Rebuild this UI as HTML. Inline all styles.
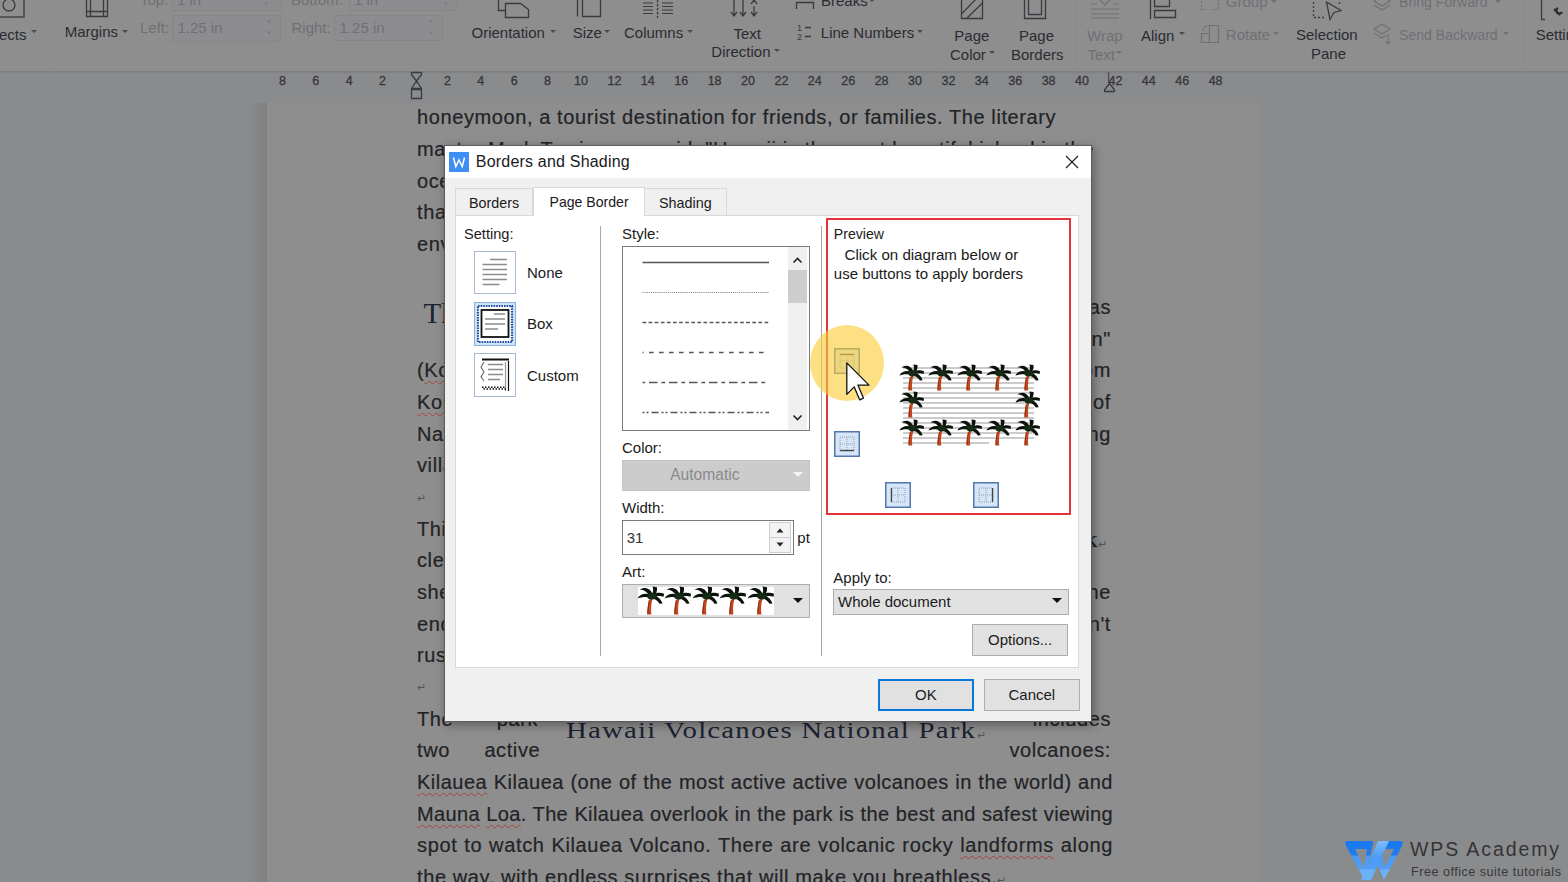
<!DOCTYPE html>
<html><head><meta charset="utf-8">
<style>
*{margin:0;padding:0;box-sizing:border-box}
html,body{width:1568px;height:882px;overflow:hidden;background:#8a8b8d;font-family:"Liberation Sans",sans-serif}
.a{position:absolute;white-space:pre}
#ribbon{position:absolute;left:0;top:0;width:1568px;height:72px;background:#8e8e8f;border-bottom:1px solid #808083;box-shadow:0 1px 1px rgba(0,0,0,0.06)}
.rt{position:absolute;white-space:pre;font-size:15px;color:#2b2c31;line-height:18px}
.rd{color:#6f7074}
.car{position:absolute;width:0;height:0;border-left:3px solid transparent;border-right:3px solid transparent;border-top:3px solid #4a4b50}
.sep{position:absolute;top:0;width:1px;height:70px;background:#8a8a8c}
.inp{position:absolute;border:1px solid #868689;background:#8d8d90;border-radius:2px}
#ruler .n{position:absolute;top:74px;font-size:12.5px;color:#35363b;-webkit-text-stroke:0.3px #35363b;width:30px;text-align:center;margin-left:-15px;line-height:14px}
#page{position:absolute;left:267px;top:103px;width:993px;height:800px;background:#8e8e8e}
#pshadow{position:absolute;left:249px;top:103px;width:18px;height:800px;background:linear-gradient(to right,rgba(0,0,0,0),rgba(0,0,0,0.05) 60%,rgba(0,0,0,0.08))}
.t{position:absolute;white-space:pre;font-size:20px;color:#222326;line-height:24px;letter-spacing:0.6px;-webkit-text-stroke:0.2px #222326}
.sq{text-decoration:underline wavy #a8443c;text-decoration-thickness:1px;text-underline-offset:3px}
.hd{position:absolute;white-space:pre;font-family:"Liberation Serif",serif;color:#1b2232;font-size:24px;letter-spacing:1px;line-height:28px;transform:scaleX(1.2);transform-origin:0 0}
.j{width:696px;text-align:justify;text-align-last:justify;white-space:normal}
.dt{position:absolute;white-space:pre;line-height:18px;color:#1a1a1a}
.tab{position:absolute}
.ret{position:absolute;font-size:11px;color:#55565a;line-height:12px}
</style></head><body>
<div id="ribbon">
<!-- effects partial -->
<svg class="a" style="left:0;top:0" width="30" height="20"><rect x="-5" y="-4" width="29" height="21" fill="none" stroke="#3a3b40" stroke-width="1.3"/><circle cx="9" cy="5" r="6" fill="none" stroke="#3a3b40" stroke-width="1.3"/></svg>
<div class="rt" style="left:-1px;top:25.6px">ects</div><div class="car" style="left:31px;top:30px"></div>
<div class="sep" style="left:50px"></div>
<!-- margins -->
<svg class="a" style="left:85px;top:0" width="24" height="18"><path d="M1.5 -2V16.5H22.5V-2M5.5 -2V16.5M18.5 -2V16.5M1.5 11.5H22.5" fill="none" stroke="#3a3b40" stroke-width="1.3"/></svg>
<div class="rt" style="left:64.7px;top:23.1px">Margins</div><div class="car" style="left:122px;top:30px"></div>
<div class="rt rd" style="left:140px;top:-9px">Top:</div>
<div class="inp" style="left:172px;top:-10px;width:110px;height:21px"></div>
<div class="rt rd" style="left:177px;top:-9px">1 in</div>
<div class="rt rd" style="left:140px;top:19px">Left:</div>
<div class="inp" style="left:172px;top:14.5px;width:109px;height:27px"></div>
<div class="rt rd" style="left:177.4px;top:19px">1.25 in</div>
<svg class="a" style="left:264px;top:17px" width="10" height="20"><path d="M2.5 5.5L5 2.5L7.5 5.5ZM2.5 14.5L5 17.5L7.5 14.5Z" fill="#7c7d81"/></svg>
<div class="rt rd" style="left:291px;top:-9px">Bottom:</div>
<div class="inp" style="left:348.7px;top:-10px;width:109px;height:21px"></div>
<div class="rt rd" style="left:354px;top:-9px">1 in</div>
<div class="rt rd" style="left:291.5px;top:19px">Right:</div>
<div class="inp" style="left:334px;top:14.5px;width:109px;height:26px"></div>
<div class="rt rd" style="left:339.6px;top:19px">1.25 in</div>
<svg class="a" style="left:426px;top:17px" width="10" height="20"><path d="M2.5 5.5L5 2.5L7.5 5.5ZM2.5 14.5L5 17.5L7.5 14.5Z" fill="#7c7d81"/></svg>
<svg class="a" style="left:261px;top:0px" width="10" height="8"><path d="M2.5 2.5L5 5.5L7.5 2.5Z" fill="#7c7d81"/></svg>
<svg class="a" style="left:441px;top:0px" width="10" height="8"><path d="M2.5 2.5L5 5.5L7.5 2.5Z" fill="#7c7d81"/></svg>
<!-- orientation -->
<svg class="a" style="left:496px;top:0" width="36" height="20"><path d="M2.5 -2V10.5H9.5" fill="none" stroke="#3a3b40" stroke-width="1.3"/><path d="M9.5 3.5H24.5L32.5 9.5V17.5H9.5Z" fill="none" stroke="#3a3b40" stroke-width="1.3"/></svg>
<div class="rt" style="left:471.5px;top:23.6px">Orientation</div><div class="car" style="left:549.5px;top:30px"></div>
<!-- size -->
<svg class="a" style="left:574px;top:0" width="30" height="20"><path d="M3.5 -2V16.5M8.5 -2V16.5H26.5V-2" fill="none" stroke="#3a3b40" stroke-width="1.3"/></svg>
<div class="rt" style="left:572.7px;top:23.6px">Size</div><div class="car" style="left:603.5px;top:30px"></div>
<!-- columns -->
<svg class="a" style="left:642px;top:0" width="34" height="20"><path d="M1 3H11M1 6.5H11M1 10H11M1 13.5H11M20 3H31M20 6.5H31M20 10H31M20 13.5H31" fill="none" stroke="#3a3b40" stroke-width="1.2"/><path d="M15.5 0V18" stroke="#3a3b40" stroke-width="1.3" stroke-dasharray="2.5 1.5"/></svg>
<div class="rt" style="left:624px;top:23.6px">Columns</div><div class="car" style="left:687px;top:30px"></div>
<!-- text direction -->
<svg class="a" style="left:730px;top:0" width="30" height="20"><path d="M4 -2V15M1 12L4 16L7 12M13 -2V15M10 12L13 16L16 12M24 6V15M21 12L24 16L27 12M21 4L24 0L27 4" fill="none" stroke="#3a3b40" stroke-width="1.3"/></svg>
<div class="rt" style="left:733.5px;top:24.6px">Text</div>
<div class="rt" style="left:711.3px;top:42.8px">Direction</div><div class="car" style="left:774px;top:49px"></div>
<!-- breaks / line numbers -->
<svg class="a" style="left:795px;top:0" width="20" height="10"><path d="M1.5 9V2.5H18.5V9" fill="none" stroke="#3a3b40" stroke-width="1.3"/></svg>
<div class="rt" style="left:821px;top:-8px">Breaks</div><div class="car" style="left:869px;top:-1px"></div>
<svg class="a" style="left:796px;top:22px" width="20" height="20"><text x="1" y="9" font-size="9" font-family="Liberation Sans" fill="#3a3b40">1</text><text x="1" y="18" font-size="9" font-family="Liberation Sans" fill="#3a3b40">2</text><path d="M9 5.5H15M9 14.5H15" stroke="#3a3b40" stroke-width="1.4"/></svg>
<div class="rt" style="left:820.8px;top:23.8px">Line Numbers</div><div class="car" style="left:917px;top:30px"></div>
<div class="sep" style="left:937px"></div>
<!-- page color -->
<svg class="a" style="left:958px;top:0" width="28" height="20"><path d="M3.5 -2V18.5H24.5V-2M3.5 14L18 -1M9 18L24.5 3" fill="none" stroke="#3a3b40" stroke-width="1.3"/></svg>
<div class="rt" style="left:954.3px;top:27.1px">Page</div>
<div class="rt" style="left:950px;top:45.8px">Color</div><div class="car" style="left:989px;top:51px"></div>
<!-- page borders -->
<svg class="a" style="left:1022px;top:0" width="26" height="20"><path d="M2.5 -2V18.5H23.5V-2M6.5 -2V14.5H19.5V-2" fill="none" stroke="#3a3b40" stroke-width="1.3"/></svg>
<div class="rt" style="left:1019px;top:27.1px">Page</div>
<div class="rt" style="left:1011px;top:45.8px">Borders</div>
<div class="sep" style="left:1075px"></div>
<!-- wrap text -->
<svg class="a" style="left:1089px;top:0" width="32" height="20"><path d="M2 4H8M24 4H30M2 9H30M2 14H30M2 18H30" stroke="#707175" stroke-width="1.2"/><path d="M10 -1L16 5L22 -1" fill="none" stroke="#707175" stroke-width="1.3"/></svg>
<div class="rt rd" style="left:1087px;top:27.1px">Wrap</div>
<div class="rt rd" style="left:1087.4px;top:45.8px">Text</div><div class="car" style="left:1116px;top:51px;border-top-color:#707175"></div>
<!-- align -->
<svg class="a" style="left:1147px;top:0" width="32" height="20"><path d="M3.5 -2V19M7.5 -2V6.5H22.5V-2M7.5 10.5H28.5V17.5H7.5Z" fill="none" stroke="#3a3b40" stroke-width="1.3"/></svg>
<div class="rt" style="left:1141px;top:27.1px">Align</div><div class="car" style="left:1179px;top:32px"></div>
<!-- group / rotate -->
<svg class="a" style="left:1200px;top:0" width="20" height="12"><path d="M1.5 -2V9.5H7M12 9.5H18.5V-2" fill="none" stroke="#707175" stroke-width="1.2" stroke-dasharray="2 1.5"/></svg>
<div class="rt rd" style="left:1225.8px;top:-6.8px">Group</div><div class="car" style="left:1271px;top:0px;border-top-color:#707175"></div>
<svg class="a" style="left:1199px;top:24px" width="22" height="20"><path d="M2.5 18.5V9.5H10.5V18.5ZM10.5 18.5H19.5V1.5H10.5V9.5M4 7C4 3 7 1.5 10 1.5" fill="none" stroke="#707175" stroke-width="1.2"/></svg>
<div class="rt rd" style="left:1225.8px;top:26.1px">Rotate</div><div class="car" style="left:1273px;top:32px;border-top-color:#707175"></div>
<!-- selection pane -->
<svg class="a" style="left:1312px;top:0" width="32" height="22"><path d="M1.5 -2V17.5H12" fill="none" stroke="#3a3b40" stroke-width="1.3" stroke-dasharray="2 2"/><path d="M27.5 -2V6" fill="none" stroke="#3a3b40" stroke-width="1.3" stroke-dasharray="2 2"/><path d="M14.5 2L29 10.5L22 12.5L18 19.5Z" fill="none" stroke="#3a3b40" stroke-width="1.3"/></svg>
<div class="rt" style="left:1296px;top:26.1px">Selection</div>
<div class="rt" style="left:1311px;top:44.7px">Pane</div>
<!-- bring / send -->
<svg class="a" style="left:1372px;top:0" width="22" height="14"><path d="M2 5L10 10L18 5M2 1L10 -4L18 1L10 6Z" fill="none" stroke="#707175" stroke-width="1.2"/></svg>
<div class="rt rd" style="left:1399px;top:-6.8px;font-size:14.1px">Bring Forward</div><div class="car" style="left:1495px;top:0px;border-top-color:#707175"></div>
<svg class="a" style="left:1372px;top:24px" width="22" height="22"><path d="M2 5L10 0L18 5L10 10ZM2 9L10 14L14 11.5M16 10V20M13.5 17.5L16 20L18.5 17.5" fill="none" stroke="#707175" stroke-width="1.2"/></svg>
<div class="rt rd" style="left:1399px;top:26.1px;font-size:14.1px">Send Backward</div><div class="car" style="left:1503px;top:32px;border-top-color:#707175"></div>
<div class="sep" style="left:1523px"></div>
<svg class="a" style="left:1540px;top:0" width="28" height="22"><path d="M1.5 -2V19.5H5" fill="none" stroke="#3a3b40" stroke-width="1.3"/><path d="M14 9L20 15M18 8a3 3 0 1 0 4 4" fill="none" stroke="#2b2c31" stroke-width="2.2"/></svg>
<div class="rt" style="left:1535.7px;top:26.1px">Settings</div>
</div>

<div id="ruler"><div class="n" style="left:282.4px">8</div><div class="n" style="left:315.8px">6</div><div class="n" style="left:349.2px">4</div><div class="n" style="left:382.6px">2</div><div class="n" style="left:447.4px">2</div><div class="n" style="left:480.8px">4</div><div class="n" style="left:514.2px">6</div><div class="n" style="left:547.6px">8</div><div class="n" style="left:581.0px">10</div><div class="n" style="left:614.4px">12</div><div class="n" style="left:647.8px">14</div><div class="n" style="left:681.2px">16</div><div class="n" style="left:714.6px">18</div><div class="n" style="left:748.0px">20</div><div class="n" style="left:781.4px">22</div><div class="n" style="left:814.8px">24</div><div class="n" style="left:848.2px">26</div><div class="n" style="left:881.6px">28</div><div class="n" style="left:915.0px">30</div><div class="n" style="left:948.4px">32</div><div class="n" style="left:981.8px">34</div><div class="n" style="left:1015.2px">36</div><div class="n" style="left:1048.6px">38</div><div class="n" style="left:1082.0px">40</div><div class="n" style="left:1115.4px">42</div><div class="n" style="left:1148.8px">44</div><div class="n" style="left:1182.2px">46</div><div class="n" style="left:1215.6px">48</div>
<svg class="a" style="left:410px;top:71px" width="14" height="29"><path d="M1.5 1.5H11.5V3.5L6.5 10L1.5 3.5Z M6.5 10L1.5 17.5H11.5Z M1.5 18.5H11.5V27.5H1.5Z" fill="none" stroke="#3a3b40" stroke-width="1.3" stroke-linejoin="round"/></svg>
<svg class="a" style="left:1103px;top:72px" width="14" height="21"><path d="M5.7 0V11" stroke="#3a3b40" stroke-width="1"/><path d="M1.5 19.5H11.5V18L6.5 11.5L1.5 18Z" fill="none" stroke="#3a3b40" stroke-width="1.3" stroke-linejoin="round"/></svg>
</div>
<div id="doc">
<div id="pshadow"></div>
<div id="page"></div>
<div class="t" style="left:417px;top:105.2px;">honeymoon, a tourist destination for friends, or families. The literary</div>
<div class="t" style="left:417px;top:136.9px;">master Mark Twain once said, &quot;Hawaii is the most beautiful island in the</div>
<div class="t" style="left:417px;top:168.5px;">ocean</div>
<div class="t" style="left:417px;top:200.2px;">that</div>
<div class="t" style="left:417px;top:231.8px;">envy</div>
<div class="t" style="right:457px;top:295.1px;">as</div>
<div class="t" style="right:457px;top:326.8px;">in&quot;</div>
<div class="t" style="left:417px;top:358.4px;">(<span class="sq">Kona</span></div>
<div class="t" style="right:457px;top:358.4px;">om</div>
<div class="t" style="left:417px;top:390.1px;"><span class="sq">Kona</span></div>
<div class="t" style="right:457px;top:390.1px;">of</div>
<div class="t" style="left:417px;top:421.7px;">Nat</div>
<div class="t" style="right:457px;top:421.7px;">ng</div>
<div class="t" style="left:417px;top:453.4px;">village</div>
<div class="t" style="left:417px;top:516.6px;">This</div>
<div class="t" style="left:417px;top:548.3px;">clear</div>
<div class="t" style="left:417px;top:580.0px;">shell</div>
<div class="t" style="right:457px;top:580.0px;">he</div>
<div class="t" style="left:417px;top:611.6px;">end</div>
<div class="t" style="right:457px;top:611.6px;">n&#39;t</div>
<div class="t" style="left:417px;top:643.2px;">rush</div>
<div class="t" style="left:417px;top:706.6px;">The</div>
<div class="t" style="left:496.8px;top:706.6px;">park</div>
<div class="t" style="right:457px;top:706.6px;">includes</div>
<div class="t" style="left:417px;top:738.2px;">two</div>
<div class="t" style="left:484.4px;top:738.2px;">active</div>
<div class="t" style="right:457px;top:738.2px;">volcanoes:</div>
<div class="t j" style="left:417px;top:769.9px;letter-spacing:0.5px"><span class="sq">Kilauea</span> Kilauea (one of the most active active volcanoes in the world) and</div>
<div class="t j" style="left:417px;top:801.5px;letter-spacing:0.36px"><span class="sq">Mauna</span> <span class="sq">Loa</span>. The Kilauea overlook in the park is the best and safest viewing</div>
<div class="t j" style="left:417px;top:833.1px;letter-spacing:0.66px">spot to watch Kilauea Volcano. There are volcanic rocky <span class="sq">landforms</span> along</div>
<div class="t" style="left:417px;top:864.8px;">the way, with endless surprises that will make you breathless.<span style="font-size:11px;color:#55565a;letter-spacing:0;-webkit-text-stroke:0">&#8629;</span></div>
<div class="ret" style="left:417px;top:491.7px">&#8629;</div>
<div class="ret" style="left:417px;top:681.3px">&#8629;</div>
<div class="hd" style="left:423.6px;top:299.1px;font-size:29px;letter-spacing:0;transform:none">The Big</div>
<div class="hd" style="left:566px;top:716.0px">Hawaii Volcanoes National Park</div>
<div class="ret" style="left:977px;top:729px">&#8629;</div>
<div class="hd" style="left:1045px;top:525.3px;letter-spacing:0">Park</div>
<div class="ret" style="left:1098px;top:538px">&#8629;</div>
</div>
<!--DLG-->
<svg width="0" height="0" style="position:absolute"><defs>
<symbol id="palm" viewBox="0 0 28 30">
<path d="M14 13.5C12.4 18 11.2 23.5 11 29.5L15.4 29.5C14.8 25 14.9 19 16.6 13.5Z" fill="#c4461c"/>
<path d="M13.3 15C12.4 19 11.9 24 12.1 28.5" stroke="#8a2a10" stroke-width="1" fill="none"/>
<path d="M1.5 13.5C3.5 9 9 7.5 15.5 9.5L15.5 13C10 11.5 6.5 12 1.5 13.5Z" fill="#0b120b"/>
<path d="M3.5 4.5C8.5 1.5 14 2.5 17 9.5L13 10.5C11 6.5 8 5 3.5 4.5Z" fill="#0b120b"/>
<path d="M16.5 1.5L21 2.2C21.5 6 20 9.5 17.5 12L15 10.5C17.2 8 17.8 5 16.5 1.5Z" fill="#0b120b"/>
<path d="M17 9.5C20.5 7.5 24.5 7 28 8.8L27.6 11.8C24 10.5 21 10.8 17.5 12.5Z" fill="#0b120b"/>
<path d="M16 10C20.5 10.5 24.5 13 26.5 18.5L23.5 18.8C21.5 15.5 19 13.8 15 13Z" fill="#0b120b"/>
<ellipse cx="15.8" cy="11.3" rx="4.5" ry="3.2" fill="#142c14"/>
</symbol>
<symbol id="bb" viewBox="0 0 26 26">
<rect x="0.75" y="0.75" width="24.5" height="24.5" fill="#d5e6fa" stroke="#5577a8" stroke-width="1.5"/>
<path d="M6 6H20V20H6ZM13 6V20M6 13H20" fill="none" stroke="#8a8a8a" stroke-width="0.8" stroke-dasharray="1 1"/>
</symbol>
</defs></svg>
<div class="a" style="left:444px;top:145px;width:648px;height:577px;background:#f0f0f0;border:1px solid #5c5c5c;box-shadow:2px 3px 10px rgba(0,0,0,0.35)"></div>
<div class="a" style="left:445px;top:146px;width:646px;height:32px;background:#fff"></div>
<svg class="a" style="left:449px;top:152px" width="20" height="20"><rect width="20" height="20" fill="#3f8ff2"/><path d="M4.5 5.5L6.8 14.5L10 8L13.2 14.5L15.5 5.5" fill="none" stroke="#fff" stroke-width="1.5"/></svg>
<div class="dt" style="left:475.8px;top:152.5px;font-size:16px;color:#1a1a1a;letter-spacing:0.2px">Borders and Shading</div>
<svg class="a" style="left:1065px;top:155px" width="14" height="14"><path d="M1 1L13 13M13 1L1 13" stroke="#222" stroke-width="1.2"/></svg>
<div class="a" style="left:455px;top:188px;width:78px;height:28px;background:#f0f0f0;border:1px solid #d9d9d9"></div>
<div class="a" style="left:644px;top:188px;width:83px;height:28px;background:#f0f0f0;border:1px solid #d9d9d9"></div>
<div class="a" style="left:455px;top:215px;width:624px;height:453px;background:#fff;border:1px solid #d9d9d9"></div>
<div class="a" style="left:533px;top:187px;width:112px;height:29px;background:#fff;border:1px solid #d9d9d9;border-bottom:none"></div>
<div class="dt" style="left:469px;top:194.0px;font-size:14.3px;color:#1a1a1a;">Borders</div>
<div class="dt" style="left:549.5px;top:192.9px;font-size:14.1px;color:#1a1a1a;">Page Border</div>
<div class="dt" style="left:659px;top:194.0px;font-size:14.4px;color:#1a1a1a;">Shading</div>
<div class="dt" style="left:464px;top:225.3px;font-size:14.6px;color:#1a1a1a;">Setting:</div>
<div class="a" style="left:474px;top:251px;width:42px;height:43px;background:#fff;border:1px solid #a7bad0"></div>
<svg class="a" style="left:474px;top:251px" width="42" height="43"><path d="M16 8.5H33M8.5 13.5H33M8.5 18.5H33M8.5 23.5H33M8.5 28.5H33M8.5 33.5H25.5" stroke="#8c8c8c" stroke-width="1.3"/></svg>
<div class="dt" style="left:527px;top:264.0px;font-size:15px;color:#1a1a1a;">None</div>
<div class="a" style="left:474px;top:302px;width:42px;height:44px;background:#cfe3fa;border:1px solid #8fb0d6"></div>
<svg class="a" style="left:474px;top:302px" width="42" height="44"><rect x="4" y="4" width="34" height="36" fill="#fff" stroke="#1f4f9a" stroke-width="2.2" stroke-dasharray="1.6 1"/><rect x="7.5" y="8" width="27" height="27" fill="#fff" stroke="#111" stroke-width="1.8"/><path d="M20 12H31M11 17H31M11 22H31M11 27H24" stroke="#8c8c8c" stroke-width="1.3"/></svg>
<div class="dt" style="left:527px;top:315.1px;font-size:15px;color:#1a1a1a;">Box</div>
<div class="a" style="left:474px;top:353px;width:42px;height:44px;background:#fff;border:1px solid #a7bad0"></div>
<svg class="a" style="left:474px;top:353px" width="42" height="44"><path d="M8 6.5H35" stroke="#111" stroke-width="2"/><path d="M34.5 8V38" stroke="#111" stroke-width="1.2"/><path d="M31.5 9V38" stroke="#999" stroke-width="1.2"/><path d="M10 9L7 14L10 19L7 24L10 28" fill="none" stroke="#666" stroke-width="1.1"/><path d="M14 11.5H29M14 16.5H29M14 21.5H29M14 26.5H26" stroke="#8c8c8c" stroke-width="1.3"/><path d="M8 34.2H32" stroke="#111" stroke-width="1.5" stroke-dasharray="1.5 1.5"/><path d="M8 36H32" stroke="#111" stroke-width="1.5" stroke-dasharray="1.5 1.5" stroke-dashoffset="1.5"/></svg>
<div class="dt" style="left:527px;top:366.8px;font-size:15px;color:#1a1a1a;">Custom</div>
<div class="a" style="left:600px;top:226px;width:1px;height:430px;background:#a8a8a8"></div>
<div class="dt" style="left:622px;top:225.2px;font-size:15px;color:#1a1a1a;">Style:</div>
<div class="a" style="left:622px;top:246px;width:188px;height:185px;background:#fff;border:1px solid #7a7a7a"></div>
<div class="a" style="left:788px;top:247px;width:19px;height:183px;background:#f0f0f0"></div>
<div class="a" style="left:788px;top:269.5px;width:19px;height:33.5px;background:#cdcdcd"></div>
<svg class="a" style="left:788px;top:247px" width="19" height="183"><path d="M5.5 15.5L9.5 11.5L13.5 15.5M5.5 168.5L9.5 172.5L13.5 168.5" fill="none" stroke="#222" stroke-width="1.6"/></svg>
<svg class="a" style="left:640px;top:255px" width="132" height="165"><path d="M2.5 7.5H129" stroke="#555" stroke-width="1.4"/><path d="M2.5 37.5H129" stroke="#8a8a8a" stroke-width="1.1" stroke-dasharray="1.2 0.9"/><path d="M2.5 67.5H129" stroke="#555" stroke-width="1.3" stroke-dasharray="3.7 2.4"/><path d="M2.5 97.5H129" stroke="#555" stroke-width="1.3" stroke-dasharray="4.6 5.4" stroke-dashoffset="3.5"/><path d="M2.5 127.5H129" stroke="#555" stroke-width="1.3" stroke-dasharray="8.5 3.9 3.7 3.9" stroke-dashoffset="13.5"/><path d="M2.5 157.5H129" stroke="#555" stroke-width="1.3" stroke-dasharray="2 2 2 3 7 3"/></svg>
<div class="dt" style="left:622px;top:439.2px;font-size:15px;color:#1a1a1a;">Color:</div>
<div class="a" style="left:622px;top:460px;width:188px;height:31px;background:#cccccc;border:1px solid #c4c4c4"></div>
<div class="dt" style="left:670.2px;top:465.6px;font-size:15.6px;color:#8a8a8a;">Automatic</div>
<svg class="a" style="left:791px;top:470px" width="14" height="10"><path d="M2 2H12L7 7Z" fill="#f4f4f4"/></svg>
<div class="dt" style="left:622px;top:498.8px;font-size:15px;color:#1a1a1a;">Width:</div>
<div class="a" style="left:622px;top:520px;width:172px;height:35px;background:#fff;border:1px solid #7a7a7a"></div>
<div class="a" style="left:769px;top:522px;width:22px;height:31px;background:#f3f3f3;border:1px solid #cfcfcf"></div>
<div class="a" style="left:770px;top:537px;width:20px;height:1px;background:#cfcfcf"></div>
<svg class="a" style="left:769px;top:522px" width="22" height="31"><path d="M7.5 10.5H14.5L11 6.5Z" fill="#222"/><path d="M7.5 20.5H14.5L11 24.5Z" fill="#222"/></svg>
<div class="dt" style="left:626.7px;top:529.2px;font-size:15px;color:#333;">31</div>
<div class="dt" style="left:797.3px;top:529.2px;font-size:15px;color:#1a1a1a;">pt</div>
<div class="dt" style="left:622px;top:562.9px;font-size:15px;color:#1a1a1a;">Art:</div>
<div class="a" style="left:622px;top:584px;width:188px;height:34px;background:#e1e1e1;border:1px solid #adadad"></div>
<div class="a" style="left:637.5px;top:587px;width:136.5px;height:28px;background:#fff"></div>
<svg class="a" style="left:636.0px;top:585px" width="28" height="30"><use href="#palm"/></svg>
<svg class="a" style="left:663.4px;top:585px" width="28" height="30"><use href="#palm"/></svg>
<svg class="a" style="left:690.8px;top:585px" width="28" height="30"><use href="#palm"/></svg>
<svg class="a" style="left:718.2px;top:585px" width="28" height="30"><use href="#palm"/></svg>
<svg class="a" style="left:745.6px;top:585px" width="28" height="30"><use href="#palm"/></svg>
<svg class="a" style="left:791px;top:596px" width="14" height="10"><path d="M2 2H12L7 7Z" fill="#111"/></svg>
<div class="a" style="left:821px;top:226px;width:1px;height:430px;background:#a8a8a8"></div>
<div class="a" style="left:826px;top:218px;width:245px;height:297px;border:2px solid #e5343a"></div>
<div class="dt" style="left:833.8px;top:225.1px;font-size:14.1px;color:#1a1a1a;">Preview</div>
<div class="dt" style="left:844.5px;top:246.3px;font-size:15.1px;color:#1a1a1a;">Click on diagram below or</div>
<div class="dt" style="left:833.8px;top:265.2px;font-size:15px;color:#1a1a1a;">use buttons to apply borders</div>
<div class="a" style="left:903px;top:367.0px;width:131px;height:1.5px;background:#cbcbcb"></div>
<div class="a" style="left:903px;top:372.0px;width:131px;height:1.5px;background:#cbcbcb"></div>
<div class="a" style="left:903px;top:377.0px;width:131px;height:1.5px;background:#cbcbcb"></div>
<div class="a" style="left:903px;top:382.0px;width:131px;height:1.5px;background:#cbcbcb"></div>
<div class="a" style="left:903px;top:387.0px;width:131px;height:1.5px;background:#cbcbcb"></div>
<div class="a" style="left:903px;top:392.0px;width:131px;height:1.5px;background:#cbcbcb"></div>
<div class="a" style="left:903px;top:397.0px;width:131px;height:1.5px;background:#cbcbcb"></div>
<div class="a" style="left:903px;top:402.0px;width:131px;height:1.5px;background:#cbcbcb"></div>
<div class="a" style="left:903px;top:407.0px;width:131px;height:1.5px;background:#cbcbcb"></div>
<div class="a" style="left:903px;top:412.0px;width:131px;height:1.5px;background:#cbcbcb"></div>
<div class="a" style="left:903px;top:417.0px;width:131px;height:1.5px;background:#cbcbcb"></div>
<div class="a" style="left:903px;top:422.0px;width:131px;height:1.5px;background:#cbcbcb"></div>
<div class="a" style="left:903px;top:427.0px;width:131px;height:1.5px;background:#cbcbcb"></div>
<div class="a" style="left:903px;top:432.0px;width:131px;height:1.5px;background:#cbcbcb"></div>
<div class="a" style="left:903px;top:437.0px;width:131px;height:1.5px;background:#cbcbcb"></div>
<div class="a" style="left:903px;top:442.0px;width:86px;height:1.5px;background:#cbcbcb"></div>
<svg class="a" style="left:897.5px;top:362.5px" width="26" height="28" viewBox="0 0 28 30"><use href="#palm"/></svg>
<svg class="a" style="left:926.6px;top:362.5px" width="26" height="28" viewBox="0 0 28 30"><use href="#palm"/></svg>
<svg class="a" style="left:955.7px;top:362.5px" width="26" height="28" viewBox="0 0 28 30"><use href="#palm"/></svg>
<svg class="a" style="left:984.8px;top:362.5px" width="26" height="28" viewBox="0 0 28 30"><use href="#palm"/></svg>
<svg class="a" style="left:1013.9px;top:362.5px" width="26" height="28" viewBox="0 0 28 30"><use href="#palm"/></svg>
<svg class="a" style="left:897.5px;top:390px" width="26" height="28" viewBox="0 0 28 30"><use href="#palm"/></svg>
<svg class="a" style="left:1013.9px;top:390px" width="26" height="28" viewBox="0 0 28 30"><use href="#palm"/></svg>
<svg class="a" style="left:897.5px;top:417.5px" width="26" height="28" viewBox="0 0 28 30"><use href="#palm"/></svg>
<svg class="a" style="left:926.6px;top:417.5px" width="26" height="28" viewBox="0 0 28 30"><use href="#palm"/></svg>
<svg class="a" style="left:955.7px;top:417.5px" width="26" height="28" viewBox="0 0 28 30"><use href="#palm"/></svg>
<svg class="a" style="left:984.8px;top:417.5px" width="26" height="28" viewBox="0 0 28 30"><use href="#palm"/></svg>
<svg class="a" style="left:1013.9px;top:417.5px" width="26" height="28" viewBox="0 0 28 30"><use href="#palm"/></svg>
<svg class="a" style="left:834px;top:348px" width="26" height="26"><use href="#bb"/><path d="M6 6.5H20" stroke="#444" stroke-width="1.3"/></svg>
<svg class="a" style="left:834px;top:431px" width="26" height="26"><use href="#bb"/><path d="M6 19.5H20" stroke="#444" stroke-width="1.3"/></svg>
<svg class="a" style="left:885px;top:482px" width="26" height="26"><use href="#bb"/><path d="M6.5 6V20" stroke="#444" stroke-width="1.3"/></svg>
<svg class="a" style="left:973px;top:482px" width="26" height="26"><use href="#bb"/><path d="M19.5 6V20" stroke="#444" stroke-width="1.3"/></svg>
<div class="a" style="left:810px;top:324.5px;width:74px;height:76px;border-radius:50%;background:rgba(250,205,55,0.62)"></div>
<div class="dt" style="left:833.3px;top:568.8px;font-size:15px;color:#1a1a1a;">Apply to:</div>
<div class="a" style="left:833px;top:589px;width:236px;height:26px;background:#e1e1e1;border:1px solid #adadad"></div>
<div class="dt" style="left:838px;top:593.4px;font-size:15px;color:#1a1a1a;">Whole document</div>
<svg class="a" style="left:1050px;top:596px" width="14" height="10"><path d="M2 2H12L7 7Z" fill="#111"/></svg>
<div class="a" style="left:972px;top:624px;width:96px;height:32px;background:#e1e1e1;border:1px solid #adadad"></div>
<div class="dt" style="left:988px;top:630.8px;font-size:15px;color:#1a1a1a;">Options...</div>
<div class="a" style="left:878px;top:679px;width:96px;height:32px;background:#e1e1e1;border:2px solid #0a78d4"></div>
<div class="dt" style="left:915px;top:685.8px;font-size:15px;color:#1a1a1a;">OK</div>
<div class="a" style="left:984px;top:679px;width:96px;height:32px;background:#e1e1e1;border:1px solid #adadad"></div>
<div class="dt" style="left:1008.5px;top:685.8px;font-size:15px;color:#1a1a1a;">Cancel</div>
<svg class="a" style="left:845px;top:361px" width="28" height="44"><path d="M1.8 1.9V33.4L9.2 25.9L14.8 38.9L18.4 37.1L12.9 24.1H24Z" fill="#fff" stroke="#111" stroke-width="1.3" stroke-linejoin="round"/></svg>
<!--/DLG-->
<!--WM-->
<svg class="a" style="left:1340px;top:836px" width="70" height="46" viewBox="1340 836 70 46">
<defs><linearGradient id="lg" x1="0" y1="0" x2="0" y2="1"><stop offset="0" stop-color="#1a78ee"/><stop offset="0.35" stop-color="#1f7cf0"/><stop offset="0.4" stop-color="#4b9bf4"/><stop offset="0.7" stop-color="#4f9ef4"/><stop offset="0.75" stop-color="#6cb2f7"/><stop offset="1" stop-color="#6cb2f7"/></linearGradient>
<linearGradient id="lg2" x1="0" y1="0" x2="0" y2="1"><stop offset="0" stop-color="#7dbcf8"/><stop offset="0.4" stop-color="#4e9df4"/><stop offset="0.7" stop-color="#4f9ef4"/><stop offset="0.75" stop-color="#6cb2f7"/><stop offset="1" stop-color="#6cb2f7"/></linearGradient></defs>
<path fill-rule="evenodd" fill="url(#lg)" d="M1347 841H1371Q1374 841 1373 844L1364.5 880L1345.5 845Q1344.5 841 1347 841ZM1355 849H1367L1364 868Z"/>
<path fill-rule="evenodd" fill="url(#lg)" d="M1383 841H1400Q1404 841 1402.5 845L1384 880L1376 861ZM1382 849H1394L1384 868Z"/>
<path fill="url(#lg2)" d="M1378 841H1389L1371 880H1361Z"/>
</svg>
<div class="a" style="left:1410px;top:838px;font-size:19.5px;color:#343436;letter-spacing:1.9px;line-height:22px">WPS Academy</div>
<div class="a" style="left:1411px;top:865px;font-size:12.6px;color:#38383a;letter-spacing:0.5px;line-height:14px">Free office suite tutorials</div>
<!--/WM-->
</body></html>
